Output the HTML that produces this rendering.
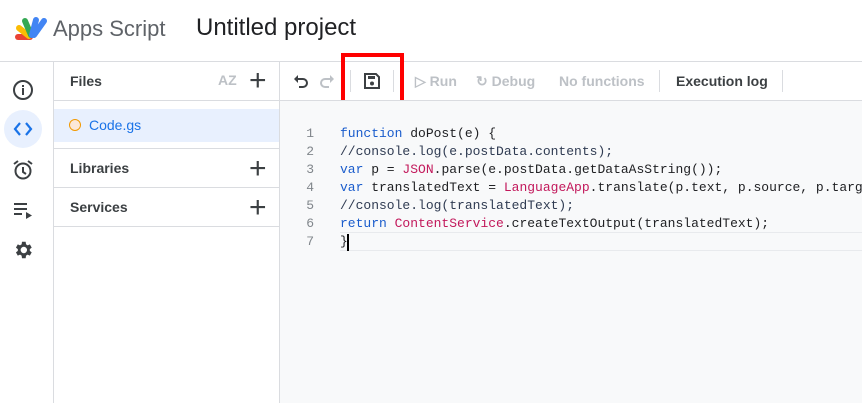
<!DOCTYPE html>
<html><head><style>
*{margin:0;padding:0;box-sizing:border-box}
body{width:862px;height:403px;overflow:hidden;background:#fff;font-family:"Liberation Sans",sans-serif;color:#3c4043;position:relative}
.abs{position:absolute}
.code{font-family:"Liberation Mono",monospace;font-size:13px;line-height:18px;white-space:pre;color:#202124}
.kw{color:#1a5ccc}.cl{color:#c2185b}.cm{color:#2f3b52;font-style:normal}
.ln{font-family:"Liberation Mono",monospace;font-size:13px;line-height:18px;color:#80868b;text-align:right;width:20px}
.pl{font-size:30px;color:#3c4043;line-height:30px}
</style></head><body>
<svg class="abs" style="left:14px;top:15px" width="34" height="26" viewBox="0 0 34 26">
<g stroke-linecap="round" stroke-width="6" fill="none">
<line x1="4" y1="22" x2="16" y2="22" stroke="#ea4335"/>
<line x1="5" y1="13" x2="15" y2="21" stroke="#fbbc04"/>
<line x1="11" y1="6" x2="17" y2="20" stroke="#34a853"/>
<line x1="22" y1="5" x2="18" y2="20" stroke="#4285f4"/>
<line x1="30" y1="6" x2="20" y2="20" stroke="#4285f4"/>
</g></svg>
<div class="abs" style="left:53px;top:16px;font-size:22px;color:#5f6368">Apps Script</div>
<div class="abs" style="left:196px;top:14px;font-size:24px;color:#202124">Untitled project</div>
<div class="abs" style="left:0;top:61px;width:862px;height:1px;background:#dadce0"></div>
<div class="abs" style="left:53px;top:62px;width:1px;height:341px;background:#dadce0"></div>
<div class="abs" style="left:279px;top:62px;width:1px;height:341px;background:#dadce0"></div>
<svg class="abs" style="left:12px;top:79px" width="22" height="22" viewBox="0 0 22 22"><circle cx="11" cy="11" r="9" fill="none" stroke="#3c4043" stroke-width="2"/><rect x="10" y="9" width="2" height="7" fill="#3c4043"/><rect x="10" y="6" width="2" height="2" fill="#3c4043"/></svg>
<div class="abs" style="left:4px;top:110px;width:38px;height:38px;border-radius:19px;background:#e8f0fe"></div>
<svg class="abs" style="left:12px;top:119px" width="22" height="20" viewBox="0 0 22 20"><path d="M8 4 L3 10 L8 16 M14 4 L19 10 L14 16" fill="none" stroke="#1a73e8" stroke-width="2.2"/></svg>
<svg class="abs" style="left:12px;top:159px" width="22" height="22" viewBox="0 0 22 22"><circle cx="11" cy="12" r="7.5" fill="none" stroke="#3c4043" stroke-width="2"/><path d="M11 8v5l3 2M2 5l4-3M20 5l-4-3" fill="none" stroke="#3c4043" stroke-width="2"/></svg>
<svg class="abs" style="left:13px;top:201px" width="22" height="18" viewBox="0 0 22 18"><path d="M1 3h13M1 8h13M1 13h8" stroke="#3c4043" stroke-width="2"/><path d="M13 11l6 3.5-6 3.5z" fill="#3c4043"/></svg>
<svg class="abs" style="left:12px;top:239px" width="22" height="22" viewBox="0 0 24 24"><path fill="#3c4043" d="M19.4 13a7.5 7.5 0 000-2l2.1-1.6-2-3.5-2.5 1a7.3 7.3 0 00-1.7-1L14.9 3h-4l-.4 2.9a7.3 7.3 0 00-1.7 1l-2.5-1-2 3.5L6.4 11a7.5 7.5 0 000 2l-2.1 1.6 2 3.5 2.5-1a7.3 7.3 0 001.7 1l.4 2.9h4l.4-2.9a7.3 7.3 0 001.7-1l2.5 1 2-3.5zM12.9 15.5a3.5 3.5 0 110-7 3.5 3.5 0 010 7z"/></svg>
<div class="abs" style="left:70px;top:73px;font-size:14px;font-weight:bold;color:#3c4043">Files</div>
<div class="abs" style="left:218px;top:72px;font-size:14px;font-weight:bold;color:#bdc1c6">AZ</div>
<div class="abs pl" style="left:249px;top:66px">+</div>
<div class="abs" style="left:54px;top:100px;width:225px;height:1px;background:#dadce0"></div>
<div class="abs" style="left:54px;top:109px;width:225px;height:33px;background:#e8f0fe"></div>
<div class="abs" style="left:69px;top:119px;width:12px;height:12px;border-radius:50%;border:1.5px solid #f29900;background:#fce8d8"></div>
<div class="abs" style="left:89px;top:117px;font-size:14px;color:#1a73e8">Code.gs</div>
<div class="abs" style="left:54px;top:148px;width:225px;height:1px;background:#dadce0"></div>
<div class="abs" style="left:70px;top:160px;font-size:14px;font-weight:bold;color:#3c4043">Libraries</div>
<div class="abs pl" style="left:249px;top:154px">+</div>
<div class="abs" style="left:54px;top:187px;width:225px;height:1px;background:#dadce0"></div>
<div class="abs" style="left:70px;top:199px;font-size:14px;font-weight:bold;color:#3c4043">Services</div>
<div class="abs pl" style="left:249px;top:193px">+</div>
<div class="abs" style="left:54px;top:226px;width:225px;height:1px;background:#dadce0"></div>
<svg class="abs" style="left:293px;top:73px" width="16" height="16" viewBox="0 0 16 16"><path d="M3 6h7a4 4 0 010 8H6" fill="none" stroke="#3c4043" stroke-width="2"/><path d="M1 6l4-4v8z" fill="#3c4043"/></svg>
<svg class="abs" style="left:319px;top:73px" width="16" height="16" viewBox="0 0 16 16"><path d="M13 6H6a4 4 0 000 8h4" fill="none" stroke="#bdc1c6" stroke-width="2"/><path d="M15 6l-4-4v8z" fill="#bdc1c6"/></svg>
<div class="abs" style="left:350px;top:70px;width:1px;height:22px;background:#dadce0"></div>
<svg class="abs" style="left:364px;top:73px" width="16" height="16" viewBox="0 0 16 16"><path d="M1 1h11l3 3v11H1z" fill="none" stroke="#3c4043" stroke-width="2"/><rect x="4" y="3" width="7" height="3" fill="#3c4043"/><circle cx="8" cy="10.5" r="2" fill="#3c4043"/></svg>
<div class="abs" style="left:341px;top:53px;width:63px;height:51px;border:4px solid #ff0000"></div>
<div class="abs" style="left:393px;top:70px;width:1px;height:22px;background:#dadce0"></div>
<div class="abs" style="left:415px;top:73px;font-size:14px;font-weight:bold;color:#bdc1c6">▷ Run</div>
<div class="abs" style="left:476px;top:73px;font-size:14px;font-weight:bold;color:#bdc1c6">↻ Debug</div>
<div class="abs" style="left:559px;top:73px;font-size:14px;font-weight:bold;color:#bdc1c6">No functions</div>
<div class="abs" style="left:659px;top:70px;width:1px;height:22px;background:#dadce0"></div>
<div class="abs" style="left:676px;top:73px;font-size:14px;font-weight:bold;color:#3c4043">Execution log</div>
<div class="abs" style="left:782px;top:70px;width:1px;height:22px;background:#dadce0"></div>
<div class="abs" style="left:280px;top:100px;width:582px;height:1px;background:#dadce0"></div>
<div class="abs" style="left:280px;top:101px;width:582px;height:302px;background:#f8f9fa"></div>
<div class="abs" style="left:340px;top:232px;width:522px;height:19px;border-top:1px solid #e8eaed;border-bottom:1px solid #e8eaed"></div>
<div class="abs ln" style="left:294px;top:125px">1<br>2<br>3<br>4<br>5<br>6<br>7</div>
<div class="abs code" style="left:340px;top:125px"><span class="kw">function</span> doPost(e) {
<span class="cm">//console.log(e.postData.contents);</span>
<span class="kw">var</span> p = <span class="cl">JSON</span>.parse(e.postData.getDataAsString());
<span class="kw">var</span> translatedText = <span class="cl">LanguageApp</span>.translate(p.text, p.source, p.target);
<span class="cm">//console.log(translatedText);</span>
<span class="kw">return</span> <span class="cl">ContentService</span>.createTextOutput(translatedText);
}</div>
<div class="abs" style="left:347px;top:234px;width:2px;height:17px;background:#000"></div>
</body></html>
